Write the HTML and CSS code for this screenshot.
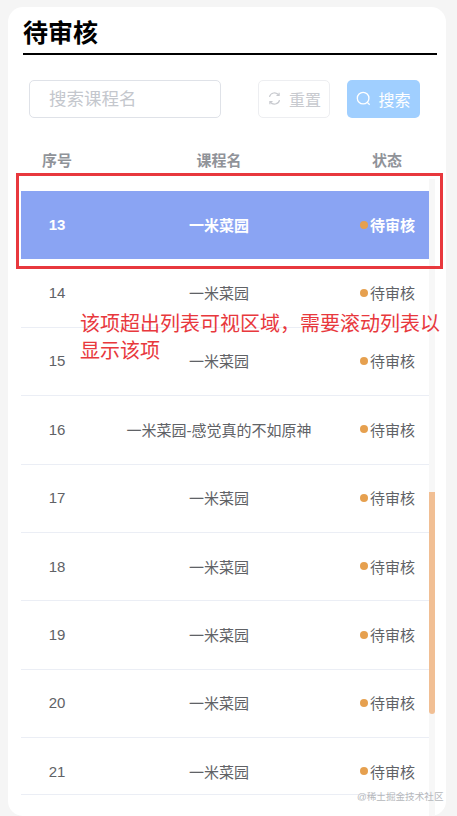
FILE: index.html
```html
<!DOCTYPE html>
<html lang="zh-CN">
<head>
<meta charset="utf-8">
<title>待审核</title>
<link rel="stylesheet" href="styles.css">
</head>
<body>
<main class="card">
  <h1 class="title">待审核</h1>
  <div class="toolbar">
    <input class="search-input" type="text" placeholder="搜索课程名">
    <button class="btn btn-reset" type="button">
      <svg class="icon" viewBox="0 0 16 16" fill="none" stroke="currentColor" stroke-width="1.3"><path d="M2.6 6.2A5.6 5.6 0 0 1 12.6 4.4"/><path d="M13.4 9.8A5.6 5.6 0 0 1 3.4 11.6"/><path d="M12.9 1.9v2.8h-2.8"/><path d="M3.1 14.1v-2.8h2.8"/></svg>
      <span>重置</span>
    </button>
    <button class="btn btn-search" type="button">
      <svg class="icon" viewBox="0 0 16 16" fill="none" stroke="currentColor" stroke-width="1.4"><circle cx="7.6" cy="7.6" r="6.2"/><path d="M12.2 12.2l2.4 2.4"/></svg>
      <span>搜索</span>
    </button>
  </div>
  <div class="thead"><span>序号</span><span>课程名</span><span>状态</span></div>
  <div class="list">
    <div class="row row-active"><span>13</span><span>一米菜园</span><span class="status"><i class="dot"></i>待审核</span></div>
    <div class="row"><span>14</span><span>一米菜园</span><span class="status"><i class="dot"></i>待审核</span></div>
    <div class="row"><span>15</span><span>一米菜园</span><span class="status"><i class="dot"></i>待审核</span></div>
    <div class="row"><span>16</span><span>一米菜园-感觉真的不如原神</span><span class="status"><i class="dot"></i>待审核</span></div>
    <div class="row"><span>17</span><span>一米菜园</span><span class="status"><i class="dot"></i>待审核</span></div>
    <div class="row"><span>18</span><span>一米菜园</span><span class="status"><i class="dot"></i>待审核</span></div>
    <div class="row"><span>19</span><span>一米菜园</span><span class="status"><i class="dot"></i>待审核</span></div>
    <div class="row"><span>20</span><span>一米菜园</span><span class="status"><i class="dot"></i>待审核</span></div>
    <div class="row"><span>21</span><span>一米菜园</span><span class="status"><i class="dot"></i>待审核</span></div>
  </div>
  <div class="scroll-track"><div class="scroll-thumb"></div></div>
</main>
<div class="highlight-box"></div>
<p class="annotation">该项超出列表可视区域，需要滚动列表以显示该项</p>
<div class="watermark">@稀土掘金技术社区</div>
</body>
</html>
```
FILE: styles.css
```css
* { box-sizing: border-box; }
html, body { margin: 0; height: 100%; }
body {
  width: 457px;
  height: 816px;
  overflow: hidden;
  background: #f5f5f5;
  padding: 7px 11px 0 8px;
  font-family: "Liberation Sans", "Noto Sans CJK SC", sans-serif;
  position: relative;
}
.card {
  position: relative;
  height: 809px;
  background: #fff;
  border-radius: 15px;
  padding: 11px 9px 0 13px;
  overflow: hidden;
}
.title {
  margin: 0 0 0 2px;
  height: 37px;
  font-size: 25px;
  line-height: 31px;
  font-weight: 700;
  color: #000;
  border-bottom: 2px solid #000;
}
.toolbar {
  display: flex;
  align-items: stretch;
  margin: 25px 0 0 8px;
  height: 38px;
}
.search-input {
  width: 192px;
  height: 38px;
  margin-right: 37px;
  padding: 1px 19px 0;
  border: 1px solid #dfe2e8;
  border-radius: 5px;
  background: #fff;
  font: 17.5px "Liberation Sans", "Noto Sans CJK SC", sans-serif;
  outline: none;
}
.search-input::placeholder { color: #c4c7cd; opacity: 1; }
.btn {
  display: flex;
  align-items: center;
  justify-content: center;
  gap: 7px;
  padding: 0 0 1px;
  border-radius: 5px;
  font: 16px "Liberation Sans", "Noto Sans CJK SC", sans-serif;
}
.icon { width: 15px; height: 15px; flex: none; }
.btn-reset {
  width: 72px;
  margin-right: 17px;
  background: #fff;
  border: 1px solid #edeef1;
  color: #c8cacf;
}
.btn-search {
  width: 73px;
  background: #a0cfff;
  border: 0;
  color: #fff;
}
.thead, .row {
  display: grid;
  grid-template-columns: 72px 252px 84px;
  align-items: center;
  text-align: center;
  font-size: 15px;
}
.thead {
  height: 30px;
  margin-top: 26px;
  font-weight: 700;
  color: #909399;
}
.list {
  height: 604px;
  width: 408px;
  margin-top: 17px;
  overflow: hidden;
  border-bottom: 1px solid #ebeef5;
}
.row {
  height: 68.4px;
  padding-bottom: 1px;
  color: #606266;
  border-bottom: 1px solid #ebeef5;
}
.row-active {
  background: #8aa4f3;
  color: #fff;
  font-weight: 700;
  border-bottom: 0;
}
.status {
  display: flex;
  align-items: center;
  justify-content: flex-start;
  padding-left: 15px;
  gap: 2px;
}
.dot {
  width: 8px;
  height: 8px;
  border-radius: 50%;
  background: #e6a04f;
  flex: none;
}
.scroll-track {
  position: absolute;
  left: 421px;
  top: 172px;
  width: 6px;
  bottom: 0;
  background: #f7f7f7;
}
.scroll-thumb {
  position: absolute;
  left: 0;
  top: 313px;
  width: 6px;
  height: 222px;
  background: #f1bf94;
  border-radius: 0 0 3px 3px;
}
.highlight-box {
  position: absolute;
  left: 16px;
  top: 173px;
  width: 427px;
  height: 96px;
  border: 3px solid #e8383d;
}
.annotation {
  position: absolute;
  left: 80px;
  top: 309px;
  width: 364px;
  margin: 0;
  font-size: 20px;
  line-height: 27px;
  color: #e8383d;
  font-family: "Noto Sans CJK SC", sans-serif;
}
.watermark {
  position: absolute;
  left: 357px;
  top: 790px;
  font-size: 9.6px;
  line-height: 13px;
  color: #b5b7bb;
  white-space: nowrap;
}
```
